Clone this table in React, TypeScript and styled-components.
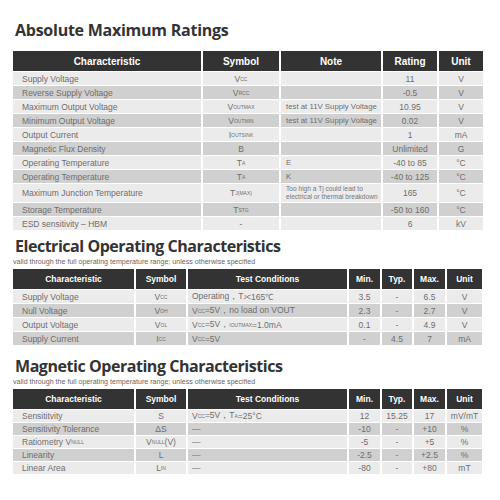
import React from "react";
import styled, { createGlobalStyle } from "styled-components";

const GlobalStyle = createGlobalStyle`
  html, body {
    margin: 0;
    padding: 0;
    background: #ffffff;
  }
  body {
    font-family: "Liberation Sans", Arial, sans-serif;
  }
`;

const Page = styled.div`
  width: 500px;
  height: 500px;
  overflow: hidden;
  padding-top: 20px;
  box-sizing: border-box;
  background: #fff;
`;

const Section = styled.section<{ $gapTop: number }>`
  margin-top: ${(p) => p.$gapTop}px;
  padding-left: 13px;
`;

const Title = styled.h2<{ $spacing: number }>`
  margin: 0 0 0 2px;
  font-family: "Open Sans", "Noto Sans", sans-serif;
  font-weight: 700;
  font-size: 16px;
  line-height: 20px;
  letter-spacing: ${(p) => p.$spacing}px;
  color: #333;
`;

const Subtitle = styled.div`
  margin-top: 2px;
  font-size: 7.1px;
  line-height: 8px;
  color: #666;
  white-space: nowrap;
`;

const Grid = styled.div<{ $cols: string; $rows: string; $top: number }>`
  display: grid;
  grid-template-columns: ${(p) => p.$cols};
  grid-template-rows: ${(p) => p.$rows};
  column-gap: 2px;
  row-gap: 1px;
  margin-top: ${(p) => p.$top}px;
`;

const Head = styled.div<{ $size: number }>`
  background: #333333;
  color: #fff;
  font-weight: 700;
  font-size: ${(p) => p.$size}px;
  display: flex;
  align-items: center;
  justify-content: center;
  white-space: nowrap;
`;

const Cell = styled.div<{ $dark: boolean; $align: "left" | "center"; $pad: number; $size: number }>`
  background: ${(p) => (p.$dark ? "#d0d0d0" : "#ebebeb")};
  color: #6e6e6e;
  font-size: ${(p) => p.$size}px;
  display: flex;
  align-items: center;
  justify-content: ${(p) => (p.$align === "center" ? "center" : "flex-start")};
  padding-left: ${(p) => (p.$align === "center" ? 0 : p.$pad)}px;
  white-space: nowrap;
  overflow: hidden;
`;

const NoteSmall = styled.span`
  font-size: 6.6px;
  line-height: 7.6px;
  white-space: nowrap;
  color: #777;
`;

const Sub = styled.span`
  font-size: 5px;
  letter-spacing: 0;
  text-transform: uppercase;
`;

const RowGroup = styled.div`
  display: contents;
`;

type Align = "left" | "center";
type Row = { cells: React.ReactNode[]; tall?: boolean };

const sym = (base: string, sub: string) => (
  <>
    {base}
    <Sub>{sub}</Sub>
  </>
);

const absHead = ["Characteristic", "Symbol", "Note", "Rating", "Unit"];
const absAlign: Align[] = ["left", "center", "left", "center", "center"];
const absRows: Row[] = [
  { cells: ["Supply Voltage", sym("V", "cc"), "", "11", "V"] },
  { cells: ["Reverse Supply Voltage", sym("V", "rcc"), "", "-0.5", "V"] },
  { cells: ["Maximum Output  Voltage", sym("V", "outmax"), "test at 11V Supply Voltage", "10.95", "V"] },
  { cells: ["Minimum Output Voltage", sym("V", "outmin"), "test at 11V Supply Voltage", "0.02", "V"] },
  { cells: ["Output Current", sym("I", "outsink"), "", "1", "mA"] },
  { cells: ["Magnetic Flux Density", "B", "", "Unlimited", "G"] },
  { cells: ["Operating Temperature", sym("T", "A"), "E", "-40 to 85", "°C"] },
  { cells: ["Operating Temperature", sym("T", "A"), "K", "-40 to 125", "°C"] },
  {
    tall: true,
    cells: [
      "Maximum Junction Temperature",
      sym("T", "J(max)"),
      <NoteSmall>
        Too high a Tj could lead to
        <br />
        electrical or thermal breakdown
      </NoteSmall>,
      "165",
      "°C",
    ],
  },
  { cells: ["Storage Temperature", sym("T", "stg"), "", "-50 to 160", "°C"] },
  { cells: ["ESD sensitivity – HBM", "-", "", "6", "kV"] },
];

const charHead = ["Characteristic", "Symbol", "Test Conditions", "Min.", "Typ.", "Max.", "Unit"];
const charAlign: Align[] = ["left", "center", "left", "center", "center", "center", "center"];

const elecRows: Row[] = [
  {
    cells: [
      "Supply Voltage",
      sym("V", "cc"),
      <>
        Operating，T<Sub>J</Sub>&lt;165℃
      </>,
      "3.5",
      "-",
      "6.5",
      "V",
    ],
  },
  {
    cells: [
      "Null Voltage",
      sym("V", "OH"),
      <>
        V<Sub>cc</Sub>=5V，no load on VOUT
      </>,
      "2.3",
      "-",
      "2.7",
      "V",
    ],
  },
  {
    cells: [
      "Output  Voltage",
      sym("V", "OL"),
      <>
        V<Sub>cc</Sub>=5V，<Sub>IOUTMAX</Sub>=1.0mA
      </>,
      "0.1",
      "-",
      "4.9",
      "V",
    ],
  },
  {
    cells: [
      "Supply Current",
      sym("I", "cc"),
      <>
        V<Sub>cc</Sub>=5V
      </>,
      "-",
      "4.5",
      "7",
      "mA",
    ],
  },
];

const magRows: Row[] = [
  {
    cells: [
      "Sensititvity",
      "S",
      <>
        V<Sub>cc</Sub>=5V，T<Sub>A</Sub>=25°C
      </>,
      "12",
      "15.25",
      "17",
      "mV/mT",
    ],
  },
  { cells: ["Sensitivity Tolerance", "ΔS", "—", "-10", "-", "+10", "%"] },
  {
    cells: [
      <>
        Ratiometry V<Sub>NULL</Sub>
      </>,
      <>
        V<Sub>NULL</Sub>(V)
      </>,
      "—",
      "-5",
      "-",
      "+5",
      "%",
    ],
  },
  { cells: ["Linearity", "L", "—", "-2.5", "-", "+2.5", "%"] },
  { cells: ["Linear Area", sym("L", "IN"), "—", "-80", "-", "+80", "mT"] },
];

type TableProps = {
  cols: string;
  head: string[];
  headSize: number;
  align: Align[];
  rows: Row[];
  top: number;
  pads: number[];
  sizes: number[];
  rowHeight: number;
};

const DataTable: React.FC<TableProps> = ({ cols, head, headSize, align, rows, top, pads, sizes, rowHeight }) => {
  const rowsTemplate = [20, ...rows.map((r) => (r.tall ? 18 : rowHeight))].map((h) => `${h}px`).join(" ");
  return (
    <Grid $cols={cols} $rows={rowsTemplate} $top={top}>
      {head.map((h) => (
        <Head key={h} $size={headSize}>
          {h}
        </Head>
      ))}
      {rows.map((row, ri) => (
        <RowGroup key={ri}>
          {row.cells.map((c, ci) => (
            <Cell key={ci} $dark={ri % 2 === 1} $align={align[ci]} $pad={pads[ci]} $size={sizes[ci]}>
              {c}
            </Cell>
          ))}
        </RowGroup>
      ))}
    </Grid>
  );
};

export default function App() {
  return (
    <>
      <GlobalStyle />
      <Page>
        <Section $gapTop={0}>
          <Title $spacing={-0.25}>Absolute Maximum Ratings</Title>
          <DataTable
            cols="188px 76px 100px 54px 44px"
            head={absHead}
            headSize={10}
            align={absAlign}
            rows={absRows}
            top={11}
            pads={[9, 0, 5, 0, 0]}
            sizes={[8.5, 8.5, 7.8, 8.5, 8.5]}
            rowHeight={13}
          />
        </Section>
        <Section $gapTop={6}>
          <Title $spacing={-0.47}>Electrical Operating Characteristics</Title>
          <Subtitle>valid through the full operating temperature range; unless otherwise specified</Subtitle>
          <DataTable
            cols="121px 50px 159px 31px 30px 31px 35px"
            head={charHead}
            headSize={8.5}
            align={charAlign}
            rows={elecRows}
            top={3}
            pads={[9, 0, 4, 0, 0, 0, 0]}
            sizes={[8.5, 8.5, 8.5, 8.5, 8.5, 8.5, 8.5]}
            rowHeight={13}
          />
        </Section>
        <Section $gapTop={11}>
          <Title $spacing={-0.45}>Magnetic Operating Characteristics</Title>
          <Subtitle>valid through the full operating temperature range; unless otherwise specified</Subtitle>
          <DataTable
            cols="121px 50px 159px 31px 30px 31px 35px"
            head={charHead}
            headSize={8.5}
            align={charAlign}
            rows={magRows}
            top={3}
            pads={[9, 0, 4, 0, 0, 0, 0]}
            sizes={[8.5, 8.5, 8.5, 8.5, 8.5, 8.5, 8.5]}
            rowHeight={12}
          />
        </Section>
      </Page>
    </>
  );
}
